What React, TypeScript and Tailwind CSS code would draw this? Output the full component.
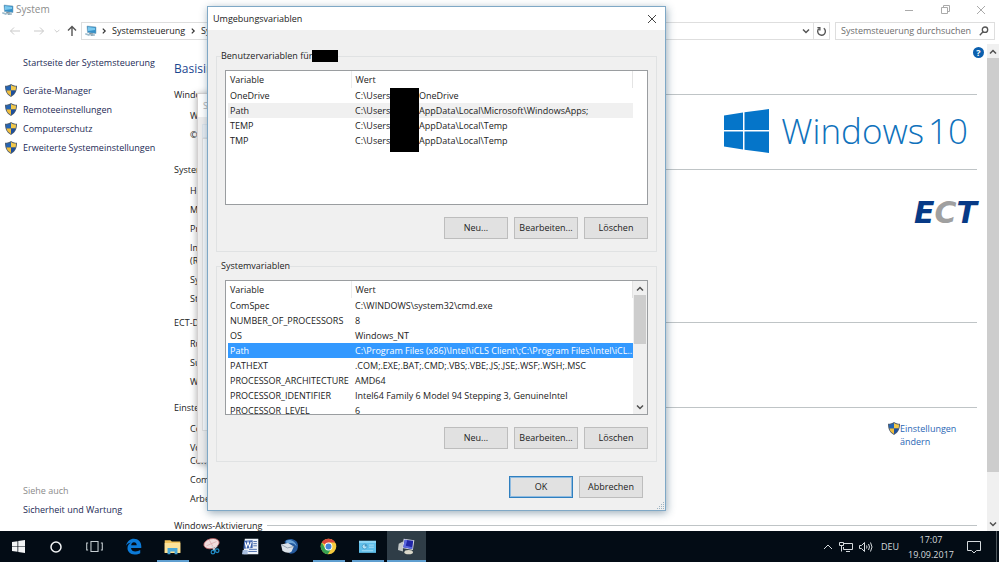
import React, { useState } from 'react';

type Variable = { name: string; value: string; prefix?: string };

const SIDE_LINKS = ['Geräte-Manager', 'Remoteeinstellungen', 'Computerschutz', 'Erweiterte Systemeinstellungen'];

const USER_VARS: Variable[] = [
  { name: 'OneDrive', prefix: 'C:\\Users\\', value: 'OneDrive' },
  { name: 'Path', prefix: 'C:\\Users\\', value: 'AppData\\Local\\Microsoft\\WindowsApps;' },
  { name: 'TEMP', prefix: 'C:\\Users\\', value: 'AppData\\Local\\Temp' },
  { name: 'TMP', prefix: 'C:\\Users\\', value: 'AppData\\Local\\Temp' },
];

const SYSTEM_VARS: Variable[] = [
  { name: 'ComSpec', value: 'C:\\WINDOWS\\system32\\cmd.exe' },
  { name: 'NUMBER_OF_PROCESSORS', value: '8' },
  { name: 'OS', value: 'Windows_NT' },
  { name: 'Path', value: 'C:\\Program Files (x86)\\Intel\\iCLS Client\\;C:\\Program Files\\Intel\\iCL...' },
  { name: 'PATHEXT', value: '.COM;.EXE;.BAT;.CMD;.VBS;.VBE;.JS;.JSE;.WSF;.WSH;.MSC' },
  { name: 'PROCESSOR_ARCHITECTURE', value: 'AMD64' },
  { name: 'PROCESSOR_IDENTIFIER', value: 'Intel64 Family 6 Model 94 Stepping 3, GenuineIntel' },
  { name: 'PROCESSOR_LEVEL', value: '6' },
];

const Chevron = ({ d, className }: { d: string; className: string }) => (
  <svg viewBox="0 0 10 10" className={className} fill="none" stroke="currentColor">
    <path d={d} />
  </svg>
);

const UP = 'M2 6.5L5 3.5L8 6.5';
const DOWN = 'M2 3.5L5 6.5L8 3.5';
const RIGHT = 'M3.5 2L6.5 5L3.5 8';

const Shield = () => (
  <svg viewBox="0 0 24 26" className="w-3 h-[13px] shrink-0">
    <path d="M12 0C9 2.500 5 3.500 0 3.500C0 13 2 20 12 26C22 20 24 13 24 3.500C19 3.500 15 2.500 12 0Z" fill="#4f5e70" />
    <path d="M12 2C9 4 6 5 2 5C2 8 2.300 11 3 13H12Z" fill="#2464b4" />
    <path d="M12 2C15 4 18 5 22 5C22 8 21.700 11 21 13H12Z" fill="#f3c94b" />
    <path d="M3 13H12V24C7 21 4 18 3 13Z" fill="#f0bd3c" />
    <path d="M21 13H12V24C17 21 20 18 21 13Z" fill="#1d4f9c" />
  </svg>
);

const PcIcon = () => (
  <svg viewBox="0 0 24 22" className="w-3 h-3 shrink-0">
    <path d="M4 1L22 3V16L5 14Z" fill="#3590c8" stroke="#7a9db3" />
    <path d="M6 3L20 5V9L6 11Z" fill="#7cc9ee" />
    <path d="M9 15L16 16L17 18H8Z" fill="#72858f" />
    <path d="M1 15L11 18L8 21L0 18Z" fill="#9dbccd" />
    <path d="M12 18L20 18V20L11 21Z" fill="#7f9fb2" />
  </svg>
);

const Section = ({ title, children, className = '' }: { title: string; children?: React.ReactNode; className?: string }) => (
  <section className={className}>
    <div className="flex items-center gap-1 leading-[13px]">
      <h2 className="whitespace-nowrap">{title}</h2>
      <div className="flex-1 h-px bg-[#bfc4c6]" />
    </div>
    <div className="flex items-start justify-between mt-2 pl-4 leading-[13px]">{children}</div>
  </section>
);

const Rows = ({ items }: { items: string[] }) => (
  <div className="flex flex-col gap-[6px]">
    {items.map((item) => (
      <p key={item} className="whitespace-pre-line">{item}</p>
    ))}
  </div>
);

const VariableList = ({ label, rows, selected, active, scroll }: { label: string; rows: Variable[]; selected: number; active?: boolean; scroll?: boolean }) => {
  const [current, setCurrent] = useState(selected);

  return (
    <div className="relative flex h-[135px] overflow-hidden border border-[#9a9da0] bg-white pl-[2px]">
      <div className="flex-1 min-w-0">
        <table aria-label={label} className="w-full table-fixed border-collapse">
          <thead>
            <tr className="h-[17px]">
              <th className="w-[123px] p-0 pl-[2px] text-left font-normal border-r border-[#ececec]">Variable</th>
              <th className="p-0 pl-1 text-left font-normal border-r border-[#e4e4e4]">Wert</th>
            </tr>
          </thead>
          <tbody>
            {rows.map((row, index) => (
              <tr
                key={row.name}
                onClick={() => setCurrent(index)}
                className={`h-[15px] leading-[15px] ${
                  index === current ? (active ? 'bg-[#3399ff] text-white' : 'bg-[#f0f0f0]') : ''
                }`}
              >
                <td className="p-0 pl-[2px] whitespace-nowrap">{row.name}</td>
                <td className="p-0 pl-1 whitespace-nowrap">
                  {row.prefix && <span className="inline-block w-16">{row.prefix}</span>}
                  {row.value}
                </td>
              </tr>
            ))}
          </tbody>
        </table>
      </div>
      {rows[0].prefix && <div className="absolute left-[164px] top-[17px] w-[29px] h-16 bg-black" />}
      <div className={`w-[14px] flex flex-col items-center ${scroll ? 'bg-[#f0f0f0]' : ''}`}>
        {scroll && (
          <>
            <Chevron d={UP} className="w-[10px] h-[10px] mt-[3px] mb-[1px] stroke-[1.5px] text-[#505050]" />
            <div className="w-3 h-[49px] bg-[#cdcdcd]" />
            <Chevron d={DOWN} className="w-[10px] h-[10px] mt-auto mb-[2px] stroke-[1.5px] text-[#505050]" />
          </>
        )}
      </div>
    </div>
  );
};

const DialogButton = ({ children, primary }: { children: React.ReactNode; primary?: boolean }) => (
  <button
    className={`w-16 h-[22px] bg-[#e1e1e1] hover:bg-[#e5f1fb] ${
      primary ? 'border-[#2f7fbf] border shadow-[inset_0_0_0_1px_#8fbbe0]' : 'border border-[#bdbdbd]'
    }`}
  >
    {children}
  </button>
);

const VariableGroup = ({ title, redacted, children }: { title: string; redacted?: boolean; children: React.ReactNode }) => (
  <fieldset className="border border-[#e0e2e3] px-2 pb-3 min-w-0">
    <legend className="flex h-[14px] items-center -ml-1 leading-[14px]">
      {title}
      {redacted && <span className="w-[26px] h-3 bg-black" />}
    </legend>
    <div className="pt-[7px]">{children}</div>
    <div className="flex justify-end gap-[6px] mt-3">
      <DialogButton>Neu...</DialogButton>
      <DialogButton>Bearbeiten...</DialogButton>
      <DialogButton>Löschen</DialogButton>
    </div>
  </fieldset>
);

const EnvironmentDialog = () => (
  <div
    role="dialog"
    aria-label="Umgebungsvariablen"
    className="absolute left-[207px] top-[6px] w-[459px] border border-[#7fa8c6] bg-[#f0f0f0] shadow-[1px_2px_8px_rgba(30,70,100,0.45)]"
  >
    <div className="flex items-center justify-between h-[23px] bg-white pl-[5px] pr-2">
      <span>Umgebungsvariablen</span>
      <button aria-label="Schließen">
        <svg viewBox="0 0 10 10" className="w-[10px] h-[10px]" stroke="#444" strokeWidth="1">
          <path d="M1 1L9 9M9 1L1 9" />
        </svg>
      </button>
    </div>
    <div className="flex flex-col gap-[7px] px-2 pt-[19px]">
      <VariableGroup title="Benutzervariablen für" redacted>
        <VariableList label="Benutzervariablen" rows={USER_VARS} selected={1} />
      </VariableGroup>
      <VariableGroup title="Systemvariablen">
        <VariableList label="Systemvariablen" rows={SYSTEM_VARS} selected={3} active scroll />
      </VariableGroup>
    </div>
    <div className="flex justify-end gap-[6px] pr-[22px] pt-[14px] pb-3">
      <DialogButton primary>OK</DialogButton>
      <DialogButton>Abbrechen</DialogButton>
    </div>
    <svg viewBox="0 0 8 8" className="absolute right-0 bottom-0 w-2 h-2" fill="#9fb4c2">
      <path d="M6 0h1v1h-1zM4 2h1v1h-1zM6 2h1v1h-1zM2 4h1v1h-1zM4 4h1v1h-1zM6 4h1v1h-1zM0 6h1v1h-1zM2 6h1v1h-1zM4 6h1v1h-1zM6 6h1v1h-1z" />
    </svg>
  </div>
);

const PropertiesDialog = () => (
  <div className="absolute left-[197px] top-[93px] w-[300px] h-[370px] border border-[#d3d0d0] bg-[#eeeded] shadow-[0_1px_7px_rgba(0,0,0,0.35)]">
    <div className="h-[23px] bg-white pl-[5px] leading-[23px] text-[#b0b0b0]">Systemeigenschaften</div>
    <div className="ml-1 mt-[7px] h-[14px] border border-[#dce3ea] bg-[#e9edf2]" />
    <div className="ml-1 h-[293px] border border-[#dcdcdc] bg-[#f6f8fa]" />
  </div>
);

const TitleBar = () => (
  <div className="flex items-center h-[19px] pl-[2px] text-[#8c8c8c] text-[10px]">
    <PcIcon />
    <span className="ml-[2px] flex-1">System</span>
    <button aria-label="Minimieren" className="w-9 flex justify-center">
      <svg viewBox="0 0 10 10" className="w-[10px] h-[10px]" stroke="#aaa"><path d="M1 5.500h8" /></svg>
    </button>
    <button aria-label="Wiederherstellen" className="w-9 flex justify-center">
      <svg viewBox="0 0 10 10" className="w-[10px] h-[10px]" stroke="#aaa" fill="none"><path d="M1.500 2.500h6v6h-6zM3.500 2.500v-2h6v6h-2" /></svg>
    </button>
    <button aria-label="Schließen" className="w-9 flex justify-center">
      <svg viewBox="0 0 10 10" className="w-[10px] h-[10px]" stroke="#aaa"><path d="M1 1L9 9M9 1L1 9" /></svg>
    </button>
  </div>
);

const AddressBar = () => (
  <div className="flex items-center h-[25px] pl-[9px] pr-1 pb-[1px]">
    <button aria-label="Zurück">
      <svg viewBox="0 0 12 10" className="w-3 h-[10px] text-[#c9c9c9]" fill="none" stroke="currentColor"><path d="M11 5H1.500M5 1.500L1.500 5L5 8.500" /></svg>
    </button>
    <button aria-label="Vorwärts" className="ml-3">
      <svg viewBox="0 0 12 10" className="w-3 h-[10px] text-[#c9c9c9]" fill="none" stroke="currentColor"><path d="M1 5H10.500M7 1.500L10.500 5L7 8.500" /></svg>
    </button>
    <Chevron d={DOWN} className="w-2 h-2 ml-2 text-[#c0c0c0]" />
    <button aria-label="Nach oben" className="ml-[6px]">
      <svg viewBox="0 0 10 12" className="w-[10px] h-3 text-[#555]" fill="none" stroke="currentColor" strokeWidth="1.400"><path d="M5 11V2M1 5.500L5 1.500L9 5.500" /></svg>
    </button>
    <div className="flex flex-1 items-center h-[18px] ml-1 border border-[#dedede]">
      <span className="ml-[3px]"><PcIcon /></span>
      <Chevron d={RIGHT} className="w-2 h-2 ml-[3px] stroke-[1.5px] text-[#333]" />
      <span className="ml-1 whitespace-nowrap">Systemsteuerung</span>
      <Chevron d={RIGHT} className="w-2 h-2 ml-1 stroke-[1.5px] text-[#333]" />
      <span className="ml-1 flex-1 whitespace-nowrap">System</span>
      <Chevron d={DOWN} className="w-[10px] h-[10px] mr-[2px] stroke-[1.5px] text-[#555]" />
      <button aria-label="Aktualisieren" className="flex items-center justify-center w-4 h-4 border-l border-[#e0e0e0]">
        <svg viewBox="0 0 12 12" className="w-[11px] h-[11px]" fill="none" stroke="#555" strokeWidth="1.500"><path d="M8.500 2.500A4.200 4.200 0 1 1 3 3M1.500 1.800H4.200V4.800" /></svg>
      </button>
    </div>
    <div className="flex items-center w-[160px] h-[18px] ml-[5px] pl-[5px] pr-[5px] border border-[#dedede]">
      <input aria-label="Systemsteuerung durchsuchen" placeholder="Systemsteuerung durchsuchen" className="flex-1 min-w-0 outline-none placeholder:text-[#6d6d6d]" />
      <svg viewBox="0 0 10 10" className="w-[10px] h-[10px] shrink-0" fill="none" stroke="#555" strokeWidth="1.300"><circle cx="6" cy="3.700" r="2.700" /><path d="M4 5.800L.8 9.200" /></svg>
    </div>
  </div>
);

const WindowsLogo = () => (
  <div className="flex items-center h-11 pr-[9px] text-[#0f72bc]">
    <svg viewBox="0 0 45 44" className="w-[45px] h-11 mr-3" fill="#0575c9">
      <path d="M0 6.500L19 3.500V21H0ZM20.500 3.300L45 0V21H20.500ZM0 22.500H19V40.500L0 37.500ZM20.500 22.500H45V44L20.500 40.700Z" />
    </svg>
    <span className="text-[35px] leading-[44px] font-light">Windows</span>
    <span className="text-[35px] leading-[44px] font-light ml-1">10</span>
  </div>
);

const SystemPage = () => (
  <main className="flex flex-1 min-h-0 overflow-hidden">
    <nav className="flex flex-col w-[174px] shrink-0 pt-3 pb-[15px] pl-[5px] text-[#1c2a55] leading-[13px]">
      <a href="#start" className="pl-[18px]">Startseite der Systemsteuerung</a>
      <ul className="flex flex-col gap-[6px] mt-[15px]">
        {SIDE_LINKS.map((link) => (
          <li key={link}>
            <a href="#link" className="flex items-center gap-[6px]">
              <Shield />
              {link}
            </a>
          </li>
        ))}
      </ul>
      <p className="mt-auto pl-[18px] text-[#8b8b8b]">Siehe auch</p>
      <a href="#wartung" className="mt-[6px] pl-[18px]">Sicherheit und Wartung</a>
    </nav>

    <div className="flex-1 min-w-0 pt-4">
      <h1 className="text-xs leading-[18px] text-[#1b468f]">Basisinformationen</h1>
      <Section title="Windows-Edition" className="mt-[10px]">
        <Rows items={['Windows 10', '© 2017']} />
        <WindowsLogo />
      </Section>
      <Section title="System" className="mt-[10px]">
        <Rows items={['Hersteller:', 'Modell:', 'Prozessor:', 'Installierter\n(RAM):', 'Systemtyp:', 'Stift:']} />
        <div className="mt-[13px] text-[30px] leading-8 font-bold italic font-['DejaVu_Sans',sans-serif] text-[#073a86]">
          E<span className="text-[#a0a0a0]">C</span>T
        </div>
      </Section>
      <Section title="ECT-Direkt" className="mt-[11px]">
        <Rows items={['Rufnummer:', 'Support:', 'Website:']} />
      </Section>
      <Section title="Einstellungen" className="mt-[13px]">
        <Rows items={['Computer:', 'Vollständiger\nComputername:', 'Computer:', 'Arbeitsgruppe:']} />
        <a href="#settings" className="flex w-[89px] text-[#2b67b5]">
          <Shield />
          <span>Einstellungen<br />ändern</span>
        </a>
      </Section>
      <Section title="Windows-Aktivierung" className="mt-[14px]" />
    </div>

    <div className="w-[10px] pt-[3px]">
      <button aria-label="Hilfe" className="-ml-1 w-[11px] h-[11px] rounded-full bg-[#0b5fae] text-white font-bold leading-[11px] block">?</button>
    </div>
    <div className="w-3 flex flex-col items-center bg-[#f0f0f0] text-[#505050]">
      <Chevron d={UP} className="w-[10px] h-[10px] mt-[3px] mb-[1px] stroke-[1.5px] shrink-0" />
      <div className="w-full h-[85%] bg-[#cdcdcd]" />
      <Chevron d={DOWN} className="w-[10px] h-[10px] mt-auto mb-[2px] stroke-[1.5px] shrink-0" />
    </div>
  </main>
);

const TASKS = [
  {
    name: 'Task-Ansicht',
    icon: <path d="M7 5h10v14H7zM3 7H1v10h2M21 7h2v10h-2" fill="none" stroke="#c6ced2" strokeWidth="1.500" />,
  },
  {
    name: 'Edge',
    icon: <path d="M1.500 11C3 4 7.500 1 12.500 1C19 1 23 5.500 23 11.500V14H8.500C8.700 17.500 11.500 19 14.500 19C17.500 19 19.500 18.200 21.500 17V21.500C19.500 22.600 17 23.300 13.500 23.300C7 23.300 3.500 19 3.500 14.500C3.500 10.800 5.500 8 8.500 6.500C5.500 7 3 8.500 1.500 11ZM8.700 10.200H16.500C16.500 7.500 15 6 12.700 6C10.500 6 9 7.500 8.700 10.200Z" fill="#0c7bd8" />,
  },
  {
    name: 'Explorer',
    open: true,
    icon: (
      <>
        <path d="M1 3h8l2 2h12v16H1z" fill="#f2c45c" />
        <path d="M1 7h22v14H1z" fill="#fde39a" />
        <path d="M5 23v-9h14v9h-4v-4H9v4z" fill="#4aa8d8" />
      </>
    ),
  },
  {
    name: 'Snipping Tool',
    icon: (
      <>
        <ellipse cx="12" cy="8" rx="11" ry="7" transform="rotate(-14 12 8)" fill="#f0dcdc" stroke="#b9575b" />
        <path d="M5 11L19 5M9 3L14 12" stroke="#d9a5a7" fill="none" />
        <path d="M12 11L17 18M20 11L14 17" stroke="#c8d4dc" strokeWidth="1.500" />
        <circle cx="14" cy="20" r="2.500" fill="none" stroke="#2088c0" strokeWidth="1.800" />
        <circle cx="20" cy="18" r="2.500" fill="none" stroke="#2088c0" strokeWidth="1.800" />
      </>
    ),
  },
  {
    name: 'Word',
    icon: (
      <>
        <path d="M4 1h19v22H2z" fill="#eef3fa" />
        <path d="M16 5h5M16 8h5M16 11h5M10 16h11M9 19h12" stroke="#4467a8" strokeWidth="1.300" />
        <path d="M3 4L15 3V14L2 15Z" fill="#3e63ac" />
        <path d="M4.500 6L6 13L8.500 6L11 13L13 5.500" fill="none" stroke="#fff" strokeWidth="1.600" />
        <path d="M1 17h7v6H0z" fill="#a9bfdf" />
      </>
    ),
  },
  {
    name: 'Thunderbird',
    icon: (
      <>
        <path d="M5 5C9-1 24 0 24 11C24 19 18 23 12 22Z" fill="#24599c" />
        <path d="M7 4C13 1 21 5 22 12C19 7 14 6 8 8Z" fill="#6ea6d8" />
        <path d="M0 9L10 7L18 12L15 19C12 22 6 21 2 18Z" fill="#dbe2e8" />
        <path d="M0 9L9 14L18 12" fill="none" stroke="#8a9aa8" strokeWidth="1.200" />
      </>
    ),
  },
  {
    name: 'Chrome',
    open: true,
    icon: (
      <>
        <circle cx="12" cy="12" r="11" fill="#f7cb3d" />
        <path d="M12 12L2.500 6.500A11 11 0 0 1 21.500 6.500H12Z" fill="#dc4a3d" />
        <path d="M2.500 6.500A11 11 0 0 0 11 23L16 15L12 12L7 14Z" fill="#36a152" />
        <circle cx="12" cy="12" r="5.500" fill="#fff" />
        <circle cx="12" cy="12" r="4.200" fill="#4285d8" />
      </>
    ),
  },
  {
    name: 'Systemsteuerung',
    open: true,
    icon: (
      <>
        <path d="M0 4h24v17H0z" fill="#5fbfea" />
        <path d="M0 4h24v3H0z" fill="#8ed6f4" />
        <circle cx="8" cy="12" r="3.500" fill="#b5e2f5" stroke="#3f95c2" />
        <path d="M8 12V8.500A3.500 3.500 0 0 1 11.500 12Z" fill="#3f95c2" />
        <path d="M14 10h7M14 13h7M4 18h16" stroke="#b5e2f5" strokeWidth="1.200" />
      </>
    ),
  },
  {
    name: 'Systemeigenschaften',
    open: true,
    current: true,
    icon: (
      <>
        <path d="M1 8L7 5V19L0 17Z" fill="#c3c8c7" />
        <path d="M8 1L23 3L21 17L6 14Z" fill="#d9dce8" />
        <path d="M9.500 2.500L21.500 4L20 15.500L7.500 13Z" fill="#2126a8" />
        <path d="M9.500 2.500L13 3L11 11L20 13L20 15.500L7.500 13Z" fill="#5a68df" />
        <ellipse cx="15" cy="20" rx="6" ry="3" fill="#dad8ca" />
      </>
    ),
  },
];

const Taskbar = () => (
  <footer className="flex items-stretch h-[31px] shrink-0 bg-[#030c15] text-[#d5dadd]">
    <button aria-label="Start" className="w-[37px] flex items-center justify-center">
      <svg viewBox="0 0 26 26" className="w-[13px] h-[13px]" fill="#f2f4f5"><path d="M0 4L11 2.500V12.300H0ZM12.500 2.200L26 0V12.300H12.500ZM0 13.700H11V23.500L0 22ZM12.500 13.700H26V26L12.500 24Z" /></svg>
    </button>
    <button aria-label="Cortana" className="w-[38px] flex items-center justify-center">
      <svg viewBox="0 0 24 24" className="w-3 h-3" fill="none" stroke="#f2f4f5" strokeWidth="3"><circle cx="12" cy="12" r="10" /></svg>
    </button>
    {TASKS.map((task) => (
      <button
        key={task.name}
        aria-label={task.name}
        className={`w-[39px] flex flex-col items-center ${task.current ? 'bg-[#2f3d47]' : ''}`}
      >
        <svg viewBox="0 0 24 24" className="w-[17px] h-[17px] mt-[7px]">{task.icon}</svg>
        {task.open && <span className={`mt-auto h-[2px] bg-[#5f9fd0] ${task.current ? 'w-full' : 'w-8'}`} />}
      </button>
    ))}
    <div className="flex items-center ml-auto">
      <Chevron d="M1 7L5 3L9 7" className="w-[10px] h-[10px]" />
      <svg viewBox="0 0 14 12" className="w-[14px] h-3 ml-[6px]" fill="none" stroke="currentColor"><path d="M5 2.500H13.500V8.500H4.500V6M7 10.500H11M.5 1.500H4.500V4.500H.5ZM2.500 4.500V10.500" /></svg>
      <svg viewBox="0 0 14 12" className="w-[14px] h-3 ml-[6px]" fill="none" stroke="currentColor"><path d="M.5 4.500H2.500L5.500 1.500V10.500L2.500 7.500H.5ZM7.500 4.500Q8.500 6 7.500 7.500M9.500 3Q11.500 6 9.500 9M11.500 1.500Q14.500 6 11.500 10.500" /></svg>
      <span className="w-[18px] ml-2">DEU</span>
      <div className="w-12 ml-2 text-center leading-[15px]">
        <p>17:07</p>
        <p>19.09.2017</p>
      </div>
      <button aria-label="Info-Center" className="ml-3">
        <svg viewBox="0 0 14 14" className="w-[14px] h-[14px]" fill="none" stroke="currentColor"><path d="M.5 1.500H13.500V10.500H9.500L7 13L4.500 10.500H.5Z" /></svg>
      </button>
      <div className="w-px h-full ml-[15px] mr-[2px] bg-[#4d565c]" />
    </div>
  </footer>
);

const App = () => (
  <div className="relative flex flex-col h-screen overflow-hidden bg-white text-[9px] text-[#222] font-['Open_Sans',sans-serif]">
    <TitleBar />
    <AddressBar />
    <SystemPage />
    <Taskbar />
    <PropertiesDialog />
    <EnvironmentDialog />
  </div>
);

export default App;
